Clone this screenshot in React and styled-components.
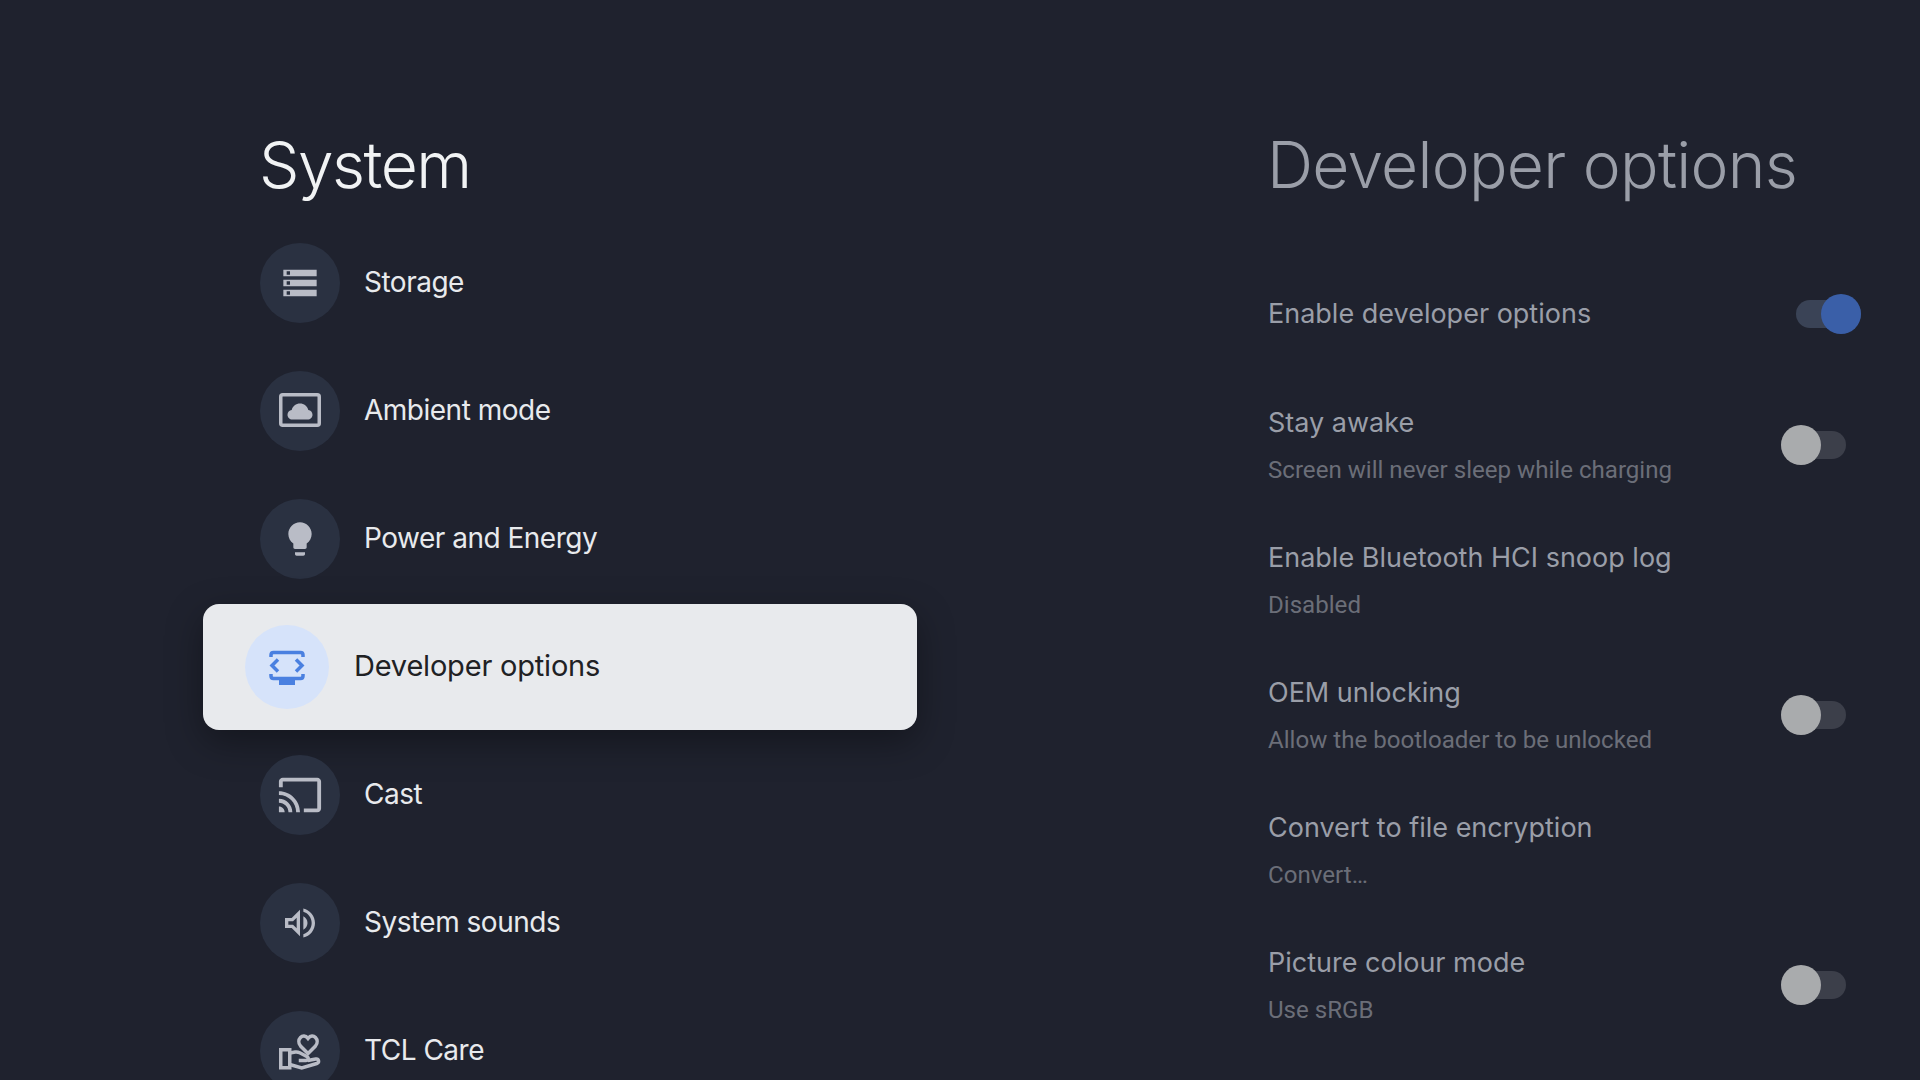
import React from 'react';
import styled, { createGlobalStyle } from 'styled-components';

const GlobalStyle = createGlobalStyle`
  html, body {
    margin: 0;
    height: 1080px;
    overflow: hidden;
    background: #1f222e;
  }
`;

const StorageIcon = () => (
  <svg width="40" height="40" viewBox="0 0 24 24" fill="currentColor">
    <path d="M2 20h20v-4H2v4zm2-3h2v2H4v-2zM2 4v4h20V4H2zm4 3H4V5h2v2zm-4 7h20v-4H2v4zm2-3h2v2H4v-2z" />
  </svg>
);

const AmbientIcon = () => (
  <svg width="46" height="46" viewBox="0 0 46 46" fill="none">
    <rect x="3.750" y="6.750" width="38.500" height="30.500" rx="2" stroke="currentColor" strokeWidth="3.500" />
    <path
      d="M15.500 31.500c-3 0-5-2.200-5-4.800 0-2.500 1.800-4.400 4.200-4.800C15.700 18.200 19 15.500 23 15.500s7.300 2.700 8.300 6.400c2.500.4 4.200 2.300 4.200 4.800 0 2.600-2 4.800-5 4.800H15.500z"
      fill="currentColor"
    />
  </svg>
);

const BulbIcon = () => (
  <svg width="40" height="40" viewBox="0 0 24 24" fill="currentColor">
    <path d="M9 21c0 .55.45 1 1 1h4c.55 0 1-.45 1-1v-1H9v1zm3-19C8.140 2 5 5.140 5 9c0 2.380 1.190 4.470 3 5.740V17c0 .55.45 1 1 1h6c.55 0 1-.45 1-1v-2.260c1.810-1.270 3-3.360 3-5.740 0-3.860-3.140-7-7-7z" />
  </svg>
);

const CodeScreenIcon = () => (
  <svg width="46" height="46" viewBox="0 0 46 46" fill="none" stroke="currentColor" strokeWidth="3.500">
    <path d="M7 13v-2c0-1.500 1-2.500 2.500-2.500h27c1.500 0 2.500 1 2.500 2.500v2" />
    <path d="M7 30v2c0 1.500 1 2.500 2.500 2.500h27c1.500 0 2.500-1 2.500-2.500v-2" />
    <path d="M14 15.500l-6 6 6 6M32 15.500l6 6-6 6" />
    <path d="M15 38.500h16" strokeWidth="5" />
  </svg>
);

const CastIcon = () => (
  <svg width="46" height="46" viewBox="0 0 24 24" fill="currentColor">
    <path d="M21 3H3c-1.100 0-2 .9-2 2v3h2V5h18v14h-7v2h7c1.100 0 2-.9 2-2V5c0-1.100-.9-2-2-2zM1 18v3h3c0-1.660-1.340-3-3-3zm0-4v2c2.760 0 5 2.240 5 5h2c0-3.870-3.130-7-7-7zm0-4v2c4.970 0 9 4.030 9 9h2c0-6.080-4.930-11-11-11z" />
  </svg>
);

const VolumeIcon = () => (
  <svg width="40" height="40" viewBox="0 0 24 24" fill="currentColor">
    <path d="M3 9v6h4l5 5V4L7 9H3zm7-.170v6.340L7.830 13H5v-2h2.830L10 8.830zM16.500 12c0-1.770-1.020-3.290-2.500-4.030v8.050c1.480-.73 2.500-2.250 2.500-4.020zM14 3.230v2.060c2.890.86 5 3.540 5 6.710s-2.110 5.850-5 6.710v2.060c4.010-.91 7-4.490 7-8.770s-2.990-7.860-7-8.770z" />
  </svg>
);

const CareIcon = () => (
  <svg width="46" height="46" viewBox="0 0 46 46" fill="none" stroke="currentColor" strokeWidth="3.500">
    <path d="M3.750 21.750h9v18h-9z" />
    <path d="M12.750 25l5.500-1c1.500-.3 3 0 4.500.8l7 3.700c2.500 1.500 1.500 4-1 4h-7" />
    <path d="M12.750 36.500l12 3.500 15-4.500c3-1 2-5-1-4.500l-8 1.500" />
    <path d="M31 25.500l-7.500-7.500C18.500 12 26 4 31 10.500c5-6.500 12.500 1.500 7.500 7.500L31 25.500z" />
  </svg>
);

const menuItems = [
  { label: 'Storage', icon: <StorageIcon /> },
  { label: 'Ambient mode', icon: <AmbientIcon /> },
  { label: 'Power and Energy', icon: <BulbIcon /> },
  { label: 'Developer options', icon: <CodeScreenIcon />, focused: true },
  { label: 'Cast', icon: <CastIcon /> },
  { label: 'System sounds', icon: <VolumeIcon /> },
  { label: 'TCL Care', icon: <CareIcon /> }
];

const optionItems = [
  { title: 'Enable developer options', toggle: 'on' },
  { title: 'Stay awake', sub: 'Screen will never sleep while charging', toggle: 'off' },
  { title: 'Enable Bluetooth HCI snoop log', sub: 'Disabled' },
  { title: 'OEM unlocking', sub: 'Allow the bootloader to be unlocked', toggle: 'off' },
  { title: 'Convert to file encryption', sub: 'Convert…' },
  { title: 'Picture colour mode', sub: 'Use sRGB', toggle: 'off' }
];

const App = () => (
  <>
    <GlobalStyle />
    <Screen>
      <MenuColumn>
        <MenuTitle>System</MenuTitle>
        {menuItems.map((item) => (
          <MenuSlot key={item.label}>
            <MenuRow $focused={item.focused}>
              <IconCircle $focused={item.focused}>{item.icon}</IconCircle>
              <MenuLabel $focused={item.focused}>{item.label}</MenuLabel>
            </MenuRow>
          </MenuSlot>
        ))}
      </MenuColumn>
      <OptionsColumn>
        <OptionsTitle>Developer options</OptionsTitle>
        <OptionsList>
          {optionItems.map((item) => (
            <OptionRow key={item.title} $single={!item.sub}>
              <OptionText $single={!item.sub}>
                <OptionName>{item.title}</OptionName>
                {item.sub && <OptionSub>{item.sub}</OptionSub>}
              </OptionText>
              {item.toggle && (
                <Track $on={item.toggle === 'on'}>
                  <Knob $on={item.toggle === 'on'} />
                </Track>
              )}
            </OptionRow>
          ))}
        </OptionsList>
      </OptionsColumn>
    </Screen>
  </>
);

const Screen = styled.main`
  display: flex;
  height: 1080px;
  overflow: hidden;
  background: #1f222e;
  font-family: Inter, Roboto, 'Liberation Sans', sans-serif;
`;

const MenuColumn = styled.section`
  width: 714px;
  margin-left: 203px;
  padding-top: 124px;
`;

const MenuTitle = styled.h1`
  margin: 0 0 0 56px;
  height: 95px;
  font-size: 64px;
  line-height: 82px;
  font-weight: 350;
  letter-spacing: -1.500px;
  color: #f1f3f4;
`;

const MenuSlot = styled.div`
  display: flex;
  align-items: center;
  height: 128px;
`;

const MenuRow = styled.div`
  display: flex;
  flex: 1;
  align-items: center;
  border-radius: 16px;
  height: ${(p) => (p.$focused ? '126px' : '80px')};
  padding-left: ${(p) => (p.$focused ? '42px' : '57px')};
  background: ${(p) => (p.$focused ? '#e8eaed' : 'transparent')};
  box-shadow: ${(p) => (p.$focused ? '0 12px 36px rgba(0, 0, 0, 0.35)' : 'none')};
`;

const IconCircle = styled.div`
  display: flex;
  align-items: center;
  justify-content: center;
  flex: none;
  width: ${(p) => (p.$focused ? '84px' : '80px')};
  height: ${(p) => (p.$focused ? '84px' : '80px')};
  border-radius: 50%;
  background: ${(p) => (p.$focused ? '#d6e3fa' : '#2a3141')};
  color: ${(p) => (p.$focused ? '#4a80e0' : '#b9bcc6')};
`;

const MenuLabel = styled.span`
  margin-left: ${(p) => (p.$focused ? '25px' : '24px')};
  padding-bottom: ${(p) => (p.$focused ? '3px' : '2px')};
  font-size: ${(p) => (p.$focused ? '29px' : '28px')};
  letter-spacing: ${(p) => (p.$focused ? '-0.2px' : '-0.5px')};
  color: ${(p) => (p.$focused ? '#202124' : '#e8eaed')};
`;

const OptionsColumn = styled.section`
  width: 578px;
  margin-left: 351px;
  padding-top: 124px;
`;

const OptionsTitle = styled.h2`
  margin: 0 0 0 -1px;
  height: 95px;
  font-size: 64px;
  line-height: 82px;
  font-weight: 350;
  letter-spacing: -0.700px;
  white-space: nowrap;
  color: #9a9ea8;
`;

const OptionsList = styled.div`
  display: flex;
  flex-direction: column;
  padding-top: 31px;
`;

const OptionRow = styled.div`
  display: flex;
  align-items: center;
  justify-content: space-between;
  height: ${(p) => (p.$single ? '127px' : '135px')};
`;

const OptionText = styled.div`
  padding-top: ${(p) => (p.$single ? '0' : '3px')};
`;

const OptionName = styled.div`
  font-size: 27px;
  line-height: 40px;
  color: #9a9ea8;
`;

const OptionSub = styled.div`
  margin-top: 8px;
  font-family: Roboto, 'Liberation Sans', sans-serif;
  font-size: 24.100px;
  line-height: 38px;
  color: #6b6e78;
`;

const Track = styled.div`
  position: relative;
  width: 65px;
  height: 28px;
  border-radius: 14px;
  background: ${(p) => (p.$on ? '#3a4356' : '#3c3f4a')};
  margin-right: ${(p) => (p.$on ? '-15px' : '0')};
`;

const Knob = styled.span`
  position: absolute;
  top: -6px;
  left: ${(p) => (p.$on ? '25px' : '0')};
  width: 40px;
  height: 40px;
  border-radius: 50%;
  background: ${(p) => (p.$on ? '#3a5fa8' : '#a9abad')};
`;

export default App;
